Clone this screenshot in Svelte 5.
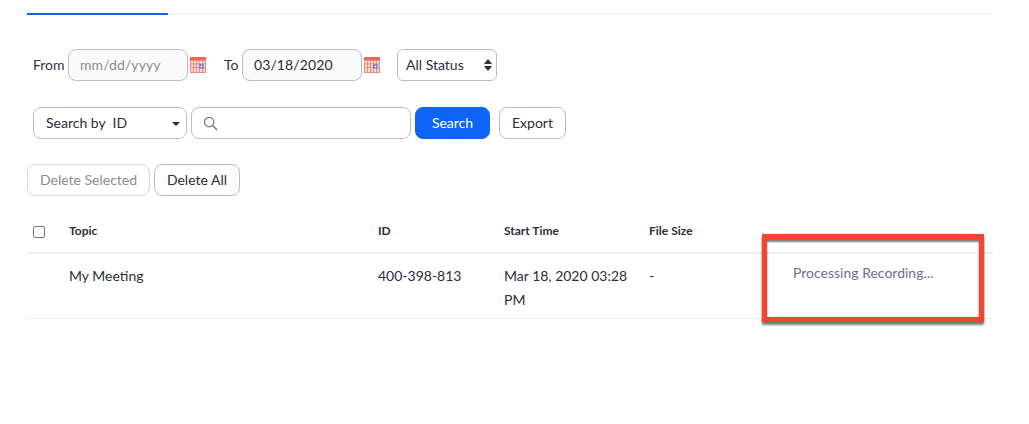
<script lang="ts">
  const columns = ['Topic', 'ID', 'Start Time', 'File Size'];
</script>

<div class="page">
  <div class="tabs"><div class="tab-active"></div></div>

  <div class="row dates">
    <label class="date-label" for="from">From</label>
    <div class="date-input placeholder" id="from">mm/dd/yyyy</div>
    <svg class="cal" viewBox="0 0 16 16" aria-hidden="true">
      <rect x="0" y="0" width="16" height="16" fill="#fcd9d3" />
      <rect x="0" y="0" width="16" height="3" fill="#e8695c" />
      <path d="M0 3.5H16M0 7H16M0 10.5H16M0 15.5H16M.5 3V16M3.5 3V16M6.5 3V16M9.5 3V16M12.5 3V16M15.5 3V16" stroke="#ee8a7e" stroke-width="1" fill="none" />
      <rect x="10" y="8" width="3" height="3" fill="#fff" stroke="#3a62d8" stroke-width="1" />
    </svg>
    <label class="date-label to" for="to">To</label>
    <div class="date-input" id="to">03/18/2020</div>
    <svg class="cal" viewBox="0 0 16 16" aria-hidden="true">
      <rect x="0" y="0" width="16" height="16" fill="#fcd9d3" />
      <rect x="0" y="0" width="16" height="3" fill="#e8695c" />
      <path d="M0 3.5H16M0 7H16M0 10.5H16M0 15.5H16M.5 3V16M3.5 3V16M6.5 3V16M9.5 3V16M12.5 3V16M15.5 3V16" stroke="#ee8a7e" stroke-width="1" fill="none" />
      <rect x="10" y="8" width="3" height="3" fill="#fff" stroke="#3a62d8" stroke-width="1" />
    </svg>
    <div class="status">
      <span>All Status</span>
      <svg class="updown" viewBox="0 0 8 12" aria-hidden="true">
        <path d="M4 0L8 5H0ZM4 12L0 7H8Z" fill="#2d2d3a" />
      </svg>
    </div>
  </div>

  <div class="row search">
    <div class="search-by">
      Search by&nbsp; ID
      <svg class="caret" viewBox="0 0 8 4" aria-hidden="true"><path d="M0 0H8L4 4Z" fill="#2d2d3a" /></svg>
    </div>
    <div class="search-input">
      <svg class="glass" viewBox="0 0 16 16" aria-hidden="true">
        <circle cx="6.5" cy="6.5" r="5" fill="none" stroke="#747487" stroke-width="1.3" />
        <path d="M10.2 10.2L15 15" stroke="#747487" stroke-width="1.5" fill="none" />
      </svg>
    </div>
    <button class="btn primary">Search</button>
    <button class="btn export">Export</button>
  </div>

  <div class="row actions">
    <button class="btn disabled">Delete Selected</button>
    <button class="btn">Delete All</button>
  </div>

  <div class="table">
    <div class="thead">
      <div class="check-cell"><span class="checkbox"></span></div>
      {#each columns as col}
        <div class="th">{col}</div>
      {/each}
      <div></div>
    </div>
    <div class="tbody">
      <div></div>
      <div>My Meeting</div>
      <div>400-398-813</div>
      <div class="start">Mar 18, 2020 03:28 PM</div>
      <div>-</div>
      <div class="processing">Processing Recording...</div>
    </div>
  </div>

  <div class="highlight"></div>
</div>

<style>
  :global(body) {
    margin: 0;
    background: #fff;
  }

  .page {
    position: relative;
    height: 424px;
    padding: 13px 36px 0 27px;
    font-family: Lato, sans-serif;
    font-size: 14px;
    color: #2d2d3a;
    box-sizing: border-box;
    overflow: hidden;
  }

  .tabs {
    height: 2px;
    background: #f4f4f8;
  }

  .tab-active {
    width: 141px;
    height: 2px;
    background: #0e65e5;
  }

  .row {
    display: flex;
    align-items: center;
    height: 32px;
  }

  .dates {
    margin-top: 34px;
    padding-left: 6px;
  }

  .date-label {
    margin-top: -2px;
    width: 35px;
    color: #333340;
  }

  .date-label.to {
    margin-left: 18px;
    width: 18px;
  }

  .date-input {
    width: 120px;
    height: 32px;
    box-sizing: border-box;
    padding: 0 11px;
    line-height: 30px;
    font-size: 14px;
    letter-spacing: 0.1px;
    background: #fafafa;
    border: 1px solid #bdbacf;
    border-radius: 8px;
  }

  .placeholder {
    color: #8c8c96;
  }

  .cal {
    width: 16px;
    height: 16px;
    margin-left: 2px;
  }

  .status {
    display: flex;
    align-items: center;
    justify-content: space-between;
    width: 100px;
    height: 32px;
    box-sizing: border-box;
    margin-left: 17px;
    padding: 0 3px 0 8px;
    border: 1px solid #bdbacf;
    border-radius: 6px;
  }

  .status span {
    margin-top: -2px;
  }

  .updown {
    width: 8px;
    height: 12px;
    margin-right: 1px;
  }

  .search {
    margin-top: 26px;
    padding-left: 6px;
  }

  .search-by {
    position: relative;
    width: 154px;
    height: 32px;
    box-sizing: border-box;
    padding-left: 12px;
    line-height: 29px;
    border: 1px solid #bdbacf;
    border-radius: 8px;
  }

  .caret {
    position: absolute;
    right: 6px;
    top: 14px;
    width: 8px;
    height: 4px;
  }

  .search-input {
    display: flex;
    align-items: center;
    width: 220px;
    height: 32px;
    box-sizing: border-box;
    margin-left: 4px;
    padding-left: 11px;
    border: 1px solid #bdbacf;
    border-radius: 8px;
  }

  .glass {
    width: 15px;
    height: 15px;
  }

  .btn {
    height: 32px;
    box-sizing: border-box;
    padding: 0 0 2px;
    font: inherit;
    color: #2d2d3a;
    background: #fff;
    border: 1px solid #bdbacf;
    border-radius: 8px;
  }

  .primary {
    width: 75px;
    margin-left: 4px;
    color: #fff;
    background: #0e65f5;
    border-color: #0e65f5;
  }

  .export {
    width: 67px;
    margin-left: 9px;
  }

  .actions {
    margin-top: 25px;
    gap: 4px;
  }

  .disabled {
    width: 123px;
    color: #8c8c96;
    border-color: #d9d8e4;
  }

  .actions .btn:last-child {
    width: 86px;
  }

  .thead,
  .tbody {
    display: grid;
    grid-template-columns: 42px 309px 126px 145px 144px 1fr;
  }

  .thead {
    align-items: center;
    height: 40px;
    padding-top: 16px;
    border-bottom: 2px solid #ededf4;
  }

  .check-cell {
    padding-left: 6px;
    display: flex;
    align-items: center;
  }

  .checkbox {
    width: 10px;
    height: 10px;
    border: 1px solid #747487;
    border-radius: 2px;
  }

  .th {
    font-size: 12px;
    font-weight: 700;
    margin-top: -3px;
  }

  .tbody {
    padding: 10px 0 6px;
    line-height: 24px;
    border-bottom: 1px solid #ededf4;
  }

  .start {
    padding-right: 15px;
  }

  .processing {
    line-height: 20px;
    margin-top: -1px;
    color: #6f6f8c;
  }

  .highlight {
    position: absolute;
    left: 762px;
    top: 234px;
    width: 222px;
    height: 88px;
    box-sizing: border-box;
    border: 5px solid #f44530;
    box-shadow: 0 3px 2px rgba(0, 0, 0, 0.5), 0 0 2px rgba(0, 0, 0, 0.2), inset 0 3px 2px rgba(0, 0, 0, 0.5), inset 0 0 2px rgba(0, 0, 0, 0.2);
  }
</style>
